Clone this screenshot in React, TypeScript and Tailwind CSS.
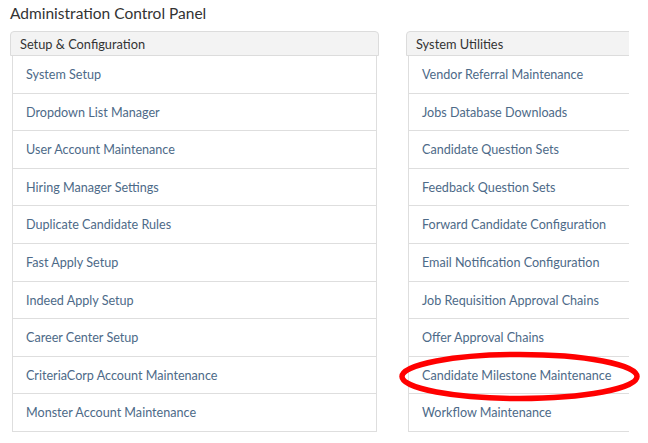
const setupItems = [
  "System Setup",
  "Dropdown List Manager",
  "User Account Maintenance",
  "Hiring Manager Settings",
  "Duplicate Candidate Rules",
  "Fast Apply Setup",
  "Indeed Apply Setup",
  "Career Center Setup",
  "CriteriaCorp Account Maintenance",
  "Monster Account Maintenance",
];

const utilityItems = [
  "Vendor Referral Maintenance",
  "Jobs Database Downloads",
  "Candidate Question Sets",
  "Feedback Question Sets",
  "Forward Candidate Configuration",
  "Email Notification Configuration",
  "Job Requisition Approval Chains",
  "Offer Approval Chains",
  "Candidate Milestone Maintenance",
  "Workflow Maintenance",
];

const Panel = ({ title, items }: { title: string; items: string[] }) => (
  <div className="w-[369px] shrink-0">
    <div className="h-[25px] rounded-t-[4px] border border-[#dcdcdc] bg-[#f3f3f3] pl-[9px] text-[12.8px] leading-[24px] text-[#333]">
      {title}
    </div>
    <ul className="mx-[2px]">
      {items.map((item) => (
        <li
          key={item}
          className="box-border h-[37.6px] border-x border-b border-[#dedede] pl-[13px] pt-[2px] text-[12.6px] leading-[34.6px] text-[#4d6a88]"
        >
          {item}
        </li>
      ))}
    </ul>
  </div>
);

export default function App() {
  return (
    <div className="relative h-[443px] w-[648px] bg-white font-['Lato','Open_Sans',sans-serif]">
      <h1 className="pl-[10px] pt-[2px] text-[15.5px] leading-[22px] text-[#333]">
        Administration Control Panel
      </h1>
      <div className="mt-[7px] w-[629px] overflow-hidden pl-[10px]">
        <div className="flex gap-[27px]">
          <Panel title="Setup & Configuration" items={setupItems} />
          <Panel title="System Utilities" items={utilityItems} />
        </div>
      </div>
      <svg className="pointer-events-none absolute left-0 top-0" width="648" height="443">
        <ellipse cx="519.5" cy="376.5" rx="117.5" ry="22" fill="none" stroke="#ff0000" strokeWidth="5.5" />
      </svg>
    </div>
  );
}
